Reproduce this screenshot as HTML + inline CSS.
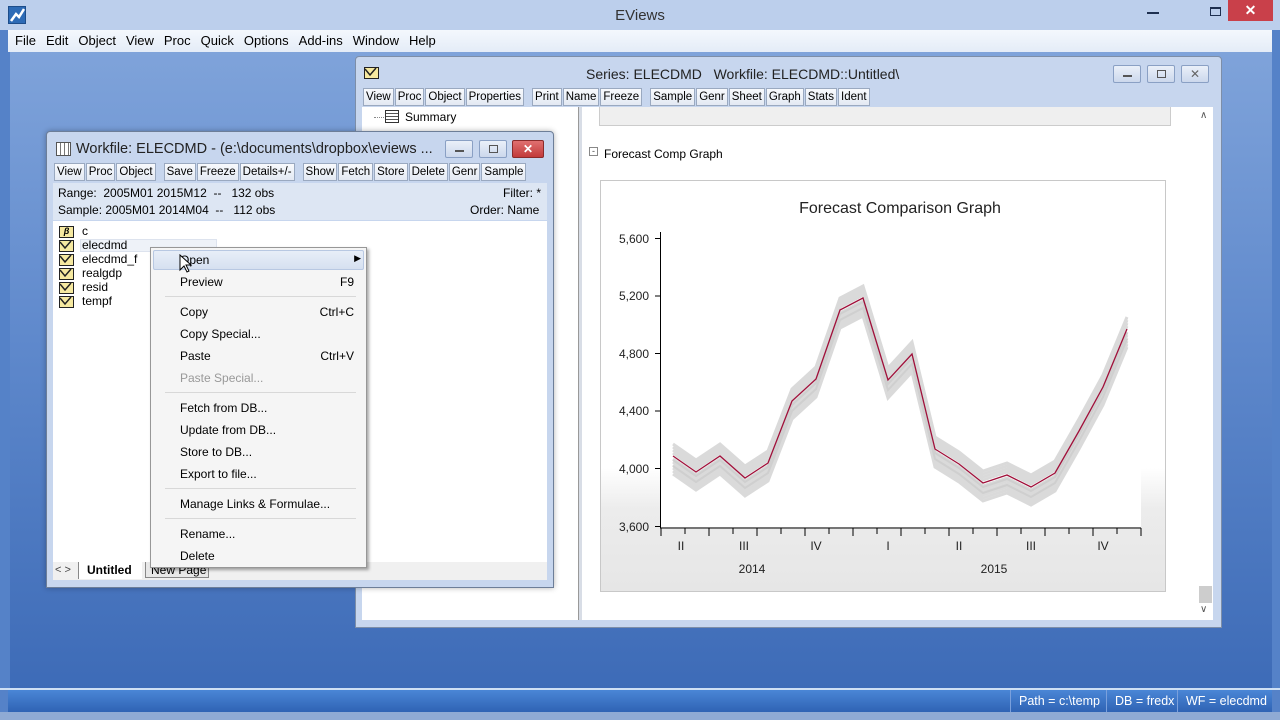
<!DOCTYPE html>
<html><head><meta charset="utf-8"><style>
*{box-sizing:border-box;margin:0;padding:0}
body{width:1280px;height:720px;overflow:hidden;position:relative;font-family:"Liberation Sans",sans-serif;font-size:12px;color:#000;background:#5582c8}
.a{position:absolute}
.desk{left:10px;top:52px;width:1262px;height:638px;background:linear-gradient(180deg,#7fa3da 0%,#5f89cc 45%,#3d6bb7 100%)}
.tb{display:flex;gap:1px}
.tb span{border:1px solid #9aa9c0;background:linear-gradient(#f8fafd,#e3e9f3);padding:0 2px;height:18px;line-height:16px;font-size:11.5px;white-space:nowrap}
.tb .g{width:6px;border:none;background:none}
.mi{position:absolute;left:29px;font-size:12px}
.sc{position:absolute;right:12px;font-size:12px}
.sep{position:absolute;left:14px;right:10px;height:1px;background:#d8d8d8}
.wb{position:absolute;width:28px;height:18px;border:1px solid #8aa0c4;border-radius:2px;background:linear-gradient(#eaf0f9,#ccd8ec)}
</style></head><body>
<div class="a" style="left:0;top:0;width:1280px;height:30px;background:#bccfec"></div>
<div class="a" style="left:8px;top:6px;width:18px;height:18px;background:#2d6bb6;border:1px solid #1d4d8a"><svg width="16" height="16"><path d="M2 14 L7 7 L10 10 L15 2" stroke="#fff" stroke-width="2.5" fill="none"/></svg></div>
<div class="a" style="left:0;top:7px;width:1280px;text-align:center;font-size:15px;color:#333">EViews</div>
<div class="a" style="left:1147px;top:12px;width:12px;height:2px;background:#1e3050"></div>
<div class="a" style="left:1210px;top:7px;width:11px;height:9px;border:1.5px solid #1e3050;border-top-width:2.5px"></div>
<div class="a" style="left:1228px;top:0;width:45px;height:21px;background:#c9404a;color:#fff;text-align:center;font-size:14px;line-height:21px;font-weight:bold">✕</div>
<div class="a" style="left:8px;top:30px;width:1264px;height:22px;background:linear-gradient(#f4f8fd,#e4ecf7)"></div>
<div class="a" style="left:15px;top:33px;font-size:13px">
<span style="margin-right:10px">File</span><span style="margin-right:10px">Edit</span><span style="margin-right:10px">Object</span><span style="margin-right:10px">View</span><span style="margin-right:10px">Proc</span><span style="margin-right:10px">Quick</span><span style="margin-right:10px">Options</span><span style="margin-right:10px">Add-ins</span><span style="margin-right:10px">Window</span><span>Help</span></div>
<div class="desk a"></div>

<div class="a" style="left:355px;top:56px;width:867px;height:572px;background:#c7d6ee;border:1px solid #7d8ea8;border-radius:4px 4px 0 0"></div>
<div class="a" style="left:364px;top:67px;width:15px;height:12px;border:1.5px solid #222;background:#f6e9a0"><svg width="12" height="9" class="a" style="left:0;top:0"><path d="M0 1 L5 7 L11 0" stroke="#222" stroke-width="1.5" fill="none"/></svg></div>
<div class="a" style="left:586px;top:66px;font-size:14px;color:#222">Series: ELECDMD &nbsp; Workfile: ELECDMD::Untitled\</div>
<div class="wb" style="left:1113px;top:65px"><div class="a" style="left:9px;top:9px;width:9px;height:2px;background:#555"></div></div>
<div class="wb" style="left:1147px;top:65px"><div class="a" style="left:9px;top:4px;width:9px;height:8px;border:1px solid #555"></div></div>
<div class="wb" style="left:1181px;top:65px;text-align:center;line-height:16px;color:#666">✕</div>
<div class="tb a" style="left:363px;top:88px"><span>View</span><span>Proc</span><span>Object</span><span>Properties</span><span class="g"></span><span>Print</span><span>Name</span><span>Freeze</span><span class="g"></span><span>Sample</span><span>Genr</span><span>Sheet</span><span>Graph</span><span>Stats</span><span>Ident</span></div>
<div class="a" style="left:362px;top:107px;width:216px;height:513px;background:#fff"></div>
<div class="a" style="left:374px;top:117px;width:10px;border-top:1px dotted #888"></div>
<div class="a" style="left:385px;top:110px;width:14px;height:13px;border:1px solid #333;background:repeating-linear-gradient(#fff 0 2px,#555 2px 3px)"></div>
<div class="a" style="left:405px;top:110px;font-size:12px">Summary</div>
<div class="a" style="left:578px;top:107px;width:4px;height:513px;background:#d8dde6;border-left:1px solid #999"></div>
<div class="a" style="left:582px;top:107px;width:631px;height:513px;background:#fff"></div>
<div class="a" style="left:599px;top:107px;width:572px;height:19px;background:#efefef;border:1px solid #ccc;border-top:none"></div>
<div class="a" style="left:1196px;top:107px;width:17px;height:513px;background:#fff"></div>
<div class="a" style="left:1200px;top:110px;font-size:10px;color:#555">∧</div>
<div class="a" style="left:1199px;top:586px;width:13px;height:17px;background:#cdcdcd"></div>
<div class="a" style="left:1200px;top:604px;font-size:10px;color:#555">∨</div>
<div class="a" style="left:589px;top:147px;width:9px;height:9px;border:1px solid #888;font-size:9px;line-height:6px;text-align:center;color:#444">-</div>
<div class="a" style="left:604px;top:147px;font-size:12px">Forecast Comp Graph</div>
<div class="a" style="left:600px;top:180px;width:566px;height:412px;border:1px solid #c8c8c8;background:linear-gradient(180deg,#fff 0%,#fff 70%,#ececec 80%,#e6e6e6 100%)"></div>
<svg class="a" style="left:0;top:0" width="1280" height="720">
<defs><polyline id="ln" fill="none" points="673,456 696,472 720,456 745,478 768,463 792,401 816,379 840,310 863,298 888,380 912,354 935,449 959,464 983,483 1007,475 1031,487 1055,473 1079,431 1103,387 1127,329"/></defs>
<rect x="661" y="232" width="480" height="295" fill="#fff"/>
<g stroke="#dadada" stroke-width="3">
<use href="#ln" transform="translate(0,-12)"/><use href="#ln" transform="translate(0,-9)"/><use href="#ln" transform="translate(0,-6)"/><use href="#ln" transform="translate(0,-3)"/><use href="#ln" transform="translate(0,3)"/><use href="#ln" transform="translate(0,6)"/><use href="#ln" transform="translate(0,9)"/><use href="#ln" transform="translate(0,12)"/><use href="#ln" transform="translate(0,15)"/><use href="#ln" transform="translate(0,18)"/>
</g>
<g stroke="#cfcfcf" stroke-width="2"><use href="#ln" transform="translate(0,4)"/><use href="#ln" transform="translate(0,10)"/></g>
<use href="#ln" stroke="#a0103a" stroke-width="1.3"/>
<g stroke="#000" stroke-width="1" fill="none">
<path d="M660.5 232 V528 H1141"/>
<path d="M655 238.5h6M655 296h6M655 353.5h6M655 411h6M655 468.5h6M655 526.5h6"/>
<path d="M661 528v8M685 528v6M709 528v8M733 528v6M757 528v8M781 528v6M805 528v8M829 528v6M853 528v8M877 528v6M901 528v8M925 528v6M949 528v8M973 528v6M997 528v8M1021 528v6M1045 528v8M1069 528v6M1093 528v8M1117 528v6M1141 528v8"/>
</g>
<g font-family="Liberation Sans" font-size="12" fill="#222" text-anchor="end">
<text x="649" y="243">5,600</text><text x="649" y="300">5,200</text><text x="649" y="358">4,800</text><text x="649" y="415">4,400</text><text x="649" y="473">4,000</text><text x="649" y="531">3,600</text>
</g>
<g font-family="Liberation Sans" font-size="12" fill="#222" text-anchor="middle">
<text x="681" y="550">II</text><text x="744" y="550">III</text><text x="816" y="550">IV</text><text x="888" y="550">I</text><text x="959" y="550">II</text><text x="1031" y="550">III</text><text x="1103" y="550">IV</text>
<text x="752" y="573">2014</text><text x="994" y="573">2015</text>
<text x="900" y="213" font-size="16">Forecast Comparison Graph</text>
</g>
</svg>

<div class="a" style="left:46px;top:131px;width:508px;height:457px;background:#c7d6ee;border:1px solid #6d7e98;border-radius:4px 4px 0 0;box-shadow:0 0 6px rgba(0,0,0,.3)"></div>
<div class="a" style="left:56px;top:142px;width:15px;height:14px;border:1px solid #555;background:repeating-linear-gradient(90deg,#fff 0 3px,#777 3px 4px)"></div>
<div class="a" style="left:76px;top:141px;font-size:14.5px;color:#222">Workfile: ELECDMD - (e:\documents\dropbox\eviews ...</div>
<div class="wb" style="left:445px;top:140px"><div class="a" style="left:9px;top:9px;width:9px;height:2px;background:#555"></div></div>
<div class="wb" style="left:479px;top:140px"><div class="a" style="left:9px;top:4px;width:9px;height:8px;border:1px solid #555"></div></div>
<div class="a" style="left:512px;top:140px;width:32px;height:18px;background:linear-gradient(#e07070,#c23a3a);border:1px solid #8a2a2a;border-radius:2px;color:#fff;text-align:center;font-weight:bold;line-height:16px">✕</div>
<div class="tb a" style="left:54px;top:163px"><span>View</span><span>Proc</span><span>Object</span><span class="g"></span><span>Save</span><span>Freeze</span><span>Details+/-</span><span class="g"></span><span>Show</span><span>Fetch</span><span>Store</span><span>Delete</span><span>Genr</span><span>Sample</span></div>
<div class="a" style="left:53px;top:183px;width:494px;height:37px;background:#dde6f3"></div>
<div class="a" style="left:58px;top:186px;font-size:12px">Range: &nbsp;2005M01 2015M12 &nbsp;-- &nbsp;&nbsp;132 obs</div>
<div class="a" style="left:58px;top:203px;font-size:12px">Sample: 2005M01 2014M04 &nbsp;-- &nbsp;&nbsp;112 obs</div>
<div class="a" style="left:503px;top:186px;font-size:12px">Filter: *</div>
<div class="a" style="left:470px;top:203px;font-size:12px">Order: Name</div>
<div class="a" style="left:53px;top:221px;width:494px;height:341px;background:#fff"></div>
<div class="a" style="left:80px;top:239px;width:137px;height:13px;background:#eef2f8;border:1px solid #dde3ee"></div>
<div class="a" style="left:59px;top:226px;width:15px;height:12px;border:1.5px solid #222;background:#f6e9a0;font-size:9px;font-weight:bold;text-align:center;line-height:9px;font-style:italic">β</div>
<div class="a" style="left:82px;top:224px">c</div>
<div class="a" style="left:59px;top:240px">
<div style="width:15px;height:12px;border:1.5px solid #222;background:#f6e9a0;margin-bottom:2px;position:relative"><svg width="12" height="9" class="a"><path d="M0 1 L5 7 L11 0" stroke="#222" stroke-width="1.5" fill="none"/></svg></div>
<div style="width:15px;height:12px;border:1.5px solid #222;background:#f6e9a0;margin-bottom:2px;position:relative"><svg width="12" height="9" class="a"><path d="M0 1 L5 7 L11 0" stroke="#222" stroke-width="1.5" fill="none"/></svg></div>
<div style="width:15px;height:12px;border:1.5px solid #222;background:#f6e9a0;margin-bottom:2px;position:relative"><svg width="12" height="9" class="a"><path d="M0 1 L5 7 L11 0" stroke="#222" stroke-width="1.5" fill="none"/></svg></div>
<div style="width:15px;height:12px;border:1.5px solid #222;background:#f6e9a0;margin-bottom:2px;position:relative"><svg width="12" height="9" class="a"><path d="M0 1 L5 7 L11 0" stroke="#222" stroke-width="1.5" fill="none"/></svg></div>
<div style="width:15px;height:12px;border:1.5px solid #222;background:#f6e9a0;margin-bottom:2px;position:relative"><svg width="12" height="9" class="a"><path d="M0 1 L5 7 L11 0" stroke="#222" stroke-width="1.5" fill="none"/></svg></div>
</div>
<div class="a" style="left:82px;top:238px;line-height:14px">elecdmd<br>elecdmd_f<br>realgdp<br>resid<br>tempf</div>
<div class="a" style="left:53px;top:562px;width:494px;height:18px;background:#f0f0f0"></div>
<div class="a" style="left:55px;top:564px;font-size:11px;color:#444">&lt; &gt;</div>
<div class="a" style="left:78px;top:562px;width:64px;height:17px;background:#fff;border-left:1px solid #888;font-weight:bold;padding-left:8px;line-height:17px">Untitled</div>
<div class="a" style="left:145px;top:562px;width:64px;height:16px;border:1px solid #888;border-top:none;padding-left:5px;line-height:16px;background:#e8e8e8">New Page</div>

<div class="a" style="left:150px;top:247px;width:217px;height:321px;background:#f5f5f5;border:1px solid #979797;box-shadow:2px 2px 3px rgba(0,0,0,.35)">
<div class="a" style="left:2px;top:2px;width:211px;height:20px;background:linear-gradient(#e8eef8,#d6e0f0);border:1px solid #b8c8e2;border-radius:2px"></div>
<div class="mi" style="top:5px">Open</div><div class="a" style="right:5px;top:5px;font-size:9px">▶</div>
<div class="mi" style="top:27px">Preview</div><div class="sc" style="top:27px">F9</div>
<div class="sep" style="top:48px"></div>
<div class="mi" style="top:57px">Copy</div><div class="sc" style="top:57px">Ctrl+C</div>
<div class="mi" style="top:79px">Copy Special...</div>
<div class="mi" style="top:101px">Paste</div><div class="sc" style="top:101px">Ctrl+V</div>
<div class="mi" style="top:123px;color:#999">Paste Special...</div>
<div class="sep" style="top:144px"></div>
<div class="mi" style="top:153px">Fetch from DB...</div>
<div class="mi" style="top:175px">Update from DB...</div>
<div class="mi" style="top:197px">Store to DB...</div>
<div class="mi" style="top:219px">Export to file...</div>
<div class="sep" style="top:240px"></div>
<div class="mi" style="top:249px">Manage Links &amp; Formulae...</div>
<div class="sep" style="top:270px"></div>
<div class="mi" style="top:279px">Rename...</div>
<div class="mi" style="top:301px">Delete</div>
</div>
<svg class="a" style="left:179px;top:254px" width="14" height="20"><path d="M1 1 V16 L5 12 L8 18 L10 17 L7 11 L12 11 Z" fill="#fff" stroke="#000" stroke-width="1"/></svg>

<div class="a" style="left:0;top:688px;width:1280px;height:2px;background:#cfe0f4"></div>
<div class="a" style="left:8px;top:690px;width:1264px;height:22px;background:linear-gradient(#4a86d6,#2f63b4)"></div>
<div class="a" style="left:0;top:712px;width:1280px;height:8px;background:#8faad4"></div>
<div class="a" style="left:1010px;top:690px;height:22px;border-left:1px solid #7aa0dc"></div>
<div class="a" style="left:1106px;top:690px;height:22px;border-left:1px solid #7aa0dc"></div>
<div class="a" style="left:1177px;top:690px;height:22px;border-left:1px solid #7aa0dc"></div>
<div class="a" style="left:1019px;top:694px;color:#fff;font-size:12.5px">Path = c:\temp</div>
<div class="a" style="left:1115px;top:694px;color:#fff;font-size:12.5px">DB = fredx</div>
<div class="a" style="left:1186px;top:694px;color:#fff;font-size:12.5px">WF = elecdmd</div>
</body></html>
